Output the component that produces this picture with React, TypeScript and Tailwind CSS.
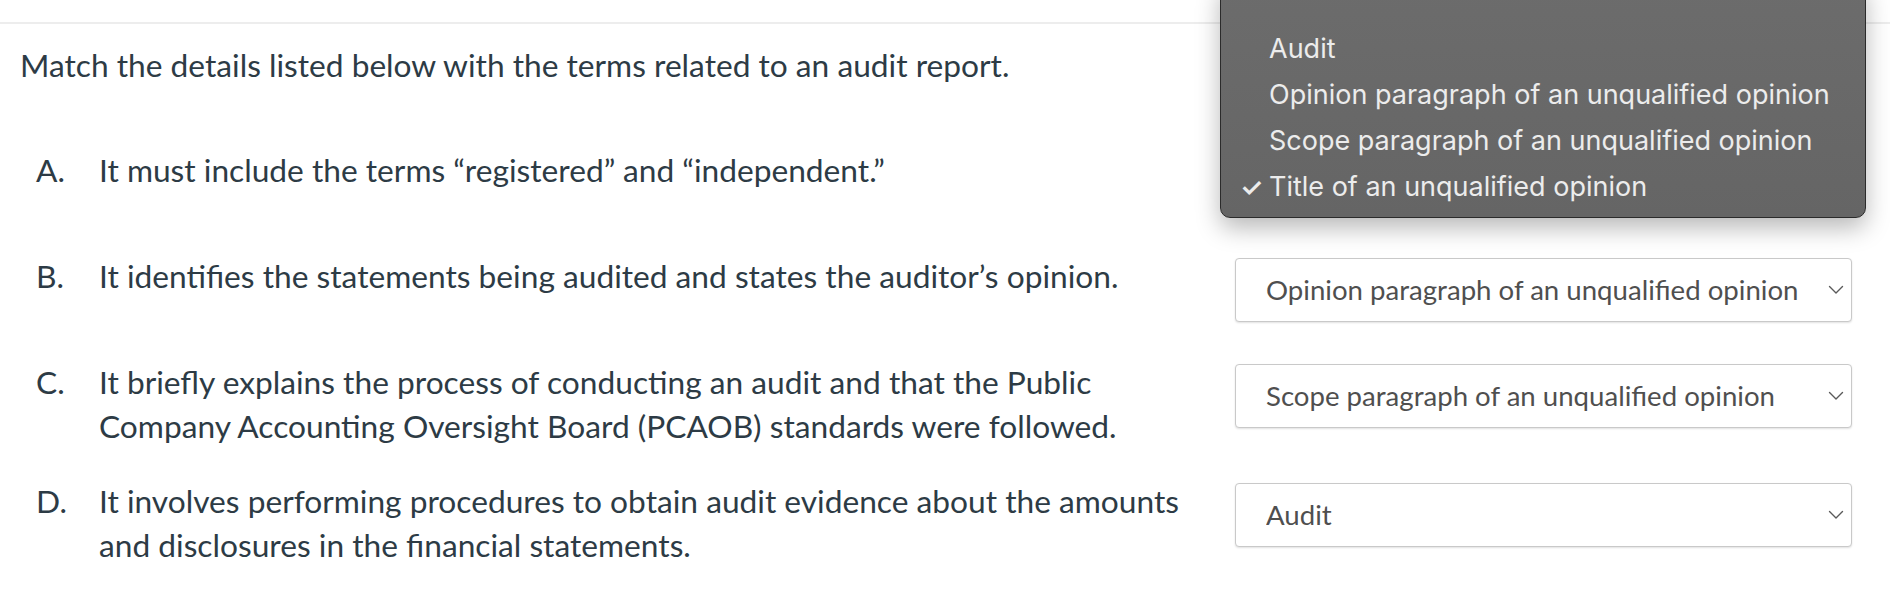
import React from "react";

const options = [
  "Audit",
  "Opinion paragraph of an unqualified opinion",
  "Scope paragraph of an unqualified opinion",
  "Title of an unqualified opinion",
];

const rows = [
  {
    letter: "A.",
    lines: ["It must include the terms “registered” and “independent.”"],
    value: "Title of an unqualified opinion",
    gap: "mt-0",
    covered: true,
  },
  {
    letter: "B.",
    lines: ["It identifies the statements being audited and states the auditor’s opinion."],
    value: "Opinion paragraph of an unqualified opinion",
    gap: "mt-[38px]",
  },
  {
    letter: "C.",
    lines: [
      "It briefly explains the process of conducting an audit and that the Public",
      "Company Accounting Oversight Board (PCAOB) standards were followed.",
    ],
    value: "Scope paragraph of an unqualified opinion",
    gap: "mt-[38px]",
  },
  {
    letter: "D.",
    lines: [
      "It involves performing procedures to obtain audit evidence about the amounts",
      "and disclosures in the financial statements.",
    ],
    value: "Audit",
    gap: "mt-[31px]",
  },
];

function Chevron() {
  return (
    <svg width="16" height="10" viewBox="0 0 16 10" fill="none">
      <path d="M1.5 1.5 L8 8 L14.5 1.5" stroke="#5a5a5a" strokeWidth="1.4" strokeLinecap="round" strokeLinejoin="round" />
    </svg>
  );
}

// the open popup sits over select A, so its label is never seen
function FakeSelect({ value, covered }: { value: string; covered?: boolean }) {
  return (
    <div className="mt-[4px] ml-auto mr-[38px] w-[617px] h-[64px] shrink-0 flex items-center justify-between pl-[30px] pr-[7px] bg-white border border-[#c9c9c9] rounded-[4px] shadow-[0_1px_2px_rgba(0,0,0,0.12)] text-[27.6px] text-[#4f4f4f]">
      <span className={covered ? "truncate invisible" : "truncate"}>{value}</span>
      <Chevron />
    </div>
  );
}

function PopupMenu() {
  return (
    <div className="absolute left-[1220px] top-[-20px] w-[646px] h-[238px] pt-[45px] pb-[9px] rounded-[10px] border border-[#2b2b2b] bg-gradient-to-b from-[#6c6c6c] to-[#656565] shadow-[0_10px_24px_rgba(0,0,0,0.28)] font-['Inter',_'Roboto',_sans-serif] text-[27px] text-[#ececec]">
      {options.map((o) => (
        <div key={o} className="relative h-[46px] flex items-center pl-[48px] whitespace-nowrap">
          {o === "Title of an unqualified opinion" && (
            <span className="absolute left-[19px] text-[26px] font-semibold">✓</span>
          )}
          {o}
        </div>
      ))}
    </div>
  );
}

export default function App() {
  return (
    <div className="relative w-full h-[612px] overflow-hidden bg-white font-['Lato',_sans-serif] text-[#2d3b45]">
      <div className="h-[24px] border-b-2 border-[#ededed]" />

      <h2 className="mt-[19px] pl-[20px] text-[31.7px] leading-[44px] whitespace-nowrap">
        Match the details listed below with the terms related to an audit report.
      </h2>

      <div className="mt-[61px] flex flex-col">
        {rows.map((r) => (
          <div key={r.letter} className={`flex items-start ${r.gap}`}>
            <div className="pl-[36px] w-[99px] shrink-0 text-[31.7px] leading-[44px]">{r.letter}</div>
            <div className="text-[31.7px] leading-[44px] whitespace-nowrap">
              {r.lines.map((l) => (
                <div key={l}>{l}</div>
              ))}
            </div>
            <FakeSelect value={r.value} covered={r.covered} />
          </div>
        ))}
      </div>

      <PopupMenu />
    </div>
  );
}
